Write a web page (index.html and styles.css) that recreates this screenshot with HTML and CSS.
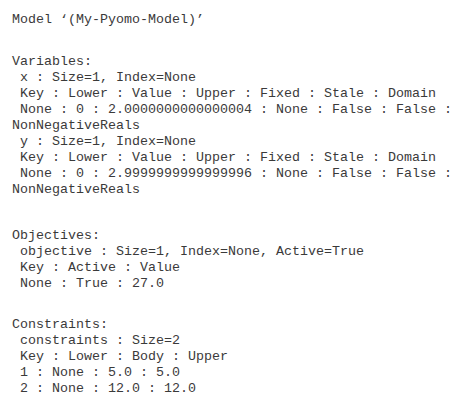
FILE: index.html
```html
<!DOCTYPE html>
<html>
<head>
<meta charset="utf-8">
<link rel="stylesheet" href="styles.css">
</head>
<body>
<div class="out">
<div class="sec sec-model"><div class="ln">Model ‘(My-Pyomo-Model)’</div></div>
<div class="sec sec-vars">
<div class="ln">Variables:</div>
<div class="ln"> x : Size=1, Index=None</div>
<div class="ln"> Key : Lower : Value : Upper : Fixed : Stale : Domain</div>
<div class="ln"> None : 0 : 2.0000000000000004 : None : False : False :</div>
<div class="ln">NonNegativeReals</div>
<div class="ln"> y : Size=1, Index=None</div>
<div class="ln"> Key : Lower : Value : Upper : Fixed : Stale : Domain</div>
<div class="ln"> None : 0 : 2.9999999999999996 : None : False : False :</div>
<div class="ln">NonNegativeReals</div>
</div>
<div class="sec sec-obj">
<div class="ln">Objectives:</div>
<div class="ln"> objective : Size=1, Index=None, Active=True</div>
<div class="ln"> Key : Active : Value</div>
<div class="ln"> None : True : 27.0</div>
</div>
<div class="sec sec-con">
<div class="ln">Constraints:</div>
<div class="ln"> constraints : Size=2</div>
<div class="ln"> Key : Lower : Body : Upper</div>
<div class="ln"> 1 : None : 5.0 : 5.0</div>
<div class="ln"> 2 : None : 12.0 : 12.0</div>
</div>
</div>
</body>
</html>
```
FILE: styles.css
```css
html, body {
  margin: 0;
  padding: 0;
  background: #ffffff;
}
.out {
  padding: 12px 0 0 12px;
  font-family: "Liberation Mono", "Courier New", monospace;
  font-size: 13.33px;
  line-height: 16px;
  color: #3a3a3a;
}
.ln {
  white-space: pre;
}
.sec-vars { margin-top: 26px; }
.sec-obj { margin-top: 30px; }
.sec-con { margin-top: 25px; }
```
